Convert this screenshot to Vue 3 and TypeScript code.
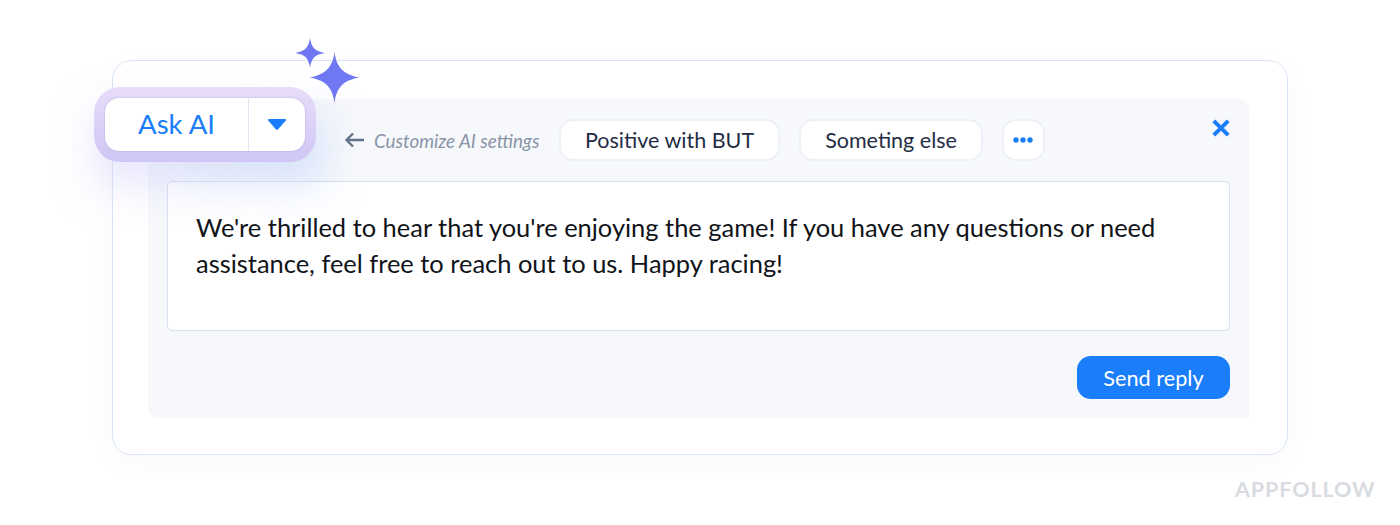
<script setup lang="ts">
const chips: string[] = ['Positive with BUT', 'Someting else']
</script>

<template>
  <div class="page">
    <div class="card">
      <div class="glow"></div>
      <div class="panel">
        <div class="toolbar">
          <svg class="arrow" width="20" height="16" viewBox="0 0 20 16" fill="none">
            <path d="M20 8H2.500M9 1.500 2.500 8 9 14.500" stroke="#5f6f85" stroke-width="2.300" />
          </svg>
          <span class="hint">Customize AI <span class="lig">settings</span></span>
          <button v-for="c in chips" :key="c" class="chip lig">{{ c }}</button>
          <button class="chip more" aria-label="More">
            <svg width="20" height="6" viewBox="0 0 20 6" fill="#1a7efb">
              <circle cx="3" cy="3" r="2.700" /><circle cx="10" cy="3" r="2.700" /><circle cx="17" cy="3" r="2.700" />
            </svg>
          </button>
          <svg class="close" width="18" height="18" viewBox="0 0 18 18" fill="none">
            <path d="M1.800 1.800l14.400 14.400M16.200 1.800 1.800 16.200" stroke="#1a7efb" stroke-width="4" />
          </svg>
        </div>
        <div class="message">
          We're thrilled to hear that you're enjoying the game! If you have any <span class="lig">questions</span> or need
          assistance, feel free to reach out to us. Happy racing!
        </div>
        <div class="actions"><button class="send">Send reply</button></div>
      </div>

      <div class="ask">
        <div class="ask-inner">
          <span class="ask-label">Ask AI</span>
          <span class="ask-drop">
            <svg width="20" height="11" viewBox="0 0 20 11"><path d="M1.200 1.400Q.6 0 2 0h16q1.400 0 .8 1.400l-7.600 8.800q-1.200 1.200-2.400 0z" fill="#1a7efb" /></svg>
          </span>
        </div>
      </div>

      <svg class="sparkles" width="66" height="66" viewBox="0 0 66 66" fill="#6f78f2">
        <path d="M15 0c1.400 9.500 5 13.500 15 15-10 1.500-13.600 5-15 15-1.400-10-5-13.500-15-15C10 13.500 13.600 9.500 15 0z" />
        <path d="M39.500 14c2 15 8.500 22.500 25 25.500-16.500 3-23 10-25 25.500-2-15.500-8.500-22.500-25-25.500 16.500-3 23-10.500 25-25.500z" />
      </svg>
    </div>
    <div class="mark">APPFOLLOW</div>
  </div>
</template>

<style>
html, body { margin: 0; background: #fff; }
</style>

<style scoped>
.page {
  width: 1400px;
  height: 525px;
  box-sizing: border-box;
  padding: 60px 0 0 112px;
  overflow: hidden;
  font-family: Lato, "Noto Sans", sans-serif;
  background: #fff;
}
.lig {
  font-variant-ligatures: common-ligatures discretionary-ligatures;
}
.card {
  position: relative;
  width: 1176px;
  height: 395px;
  box-sizing: border-box;
  padding: 38px 38px 36px 35px;
  border: 1px solid #d9e5f4;
  border-radius: 20px;
  background: #fff;
  box-shadow: 0 8px 24px rgba(120, 135, 170, 0.05);
}
.panel {
  height: 319px;
  box-sizing: border-box;
  padding: 20px 19px 19px 19px;
  background: #f7f8fb;
  border-radius: 10px 10px 0 10px;
  position: relative;
  z-index: 1;
}
.toolbar {
  display: flex;
  align-items: center;
  height: 42px;
  padding-left: 177px;
  position: relative;
}
.arrow { margin-right: 10px; flex: none; }
.hint {
  width: 185px;
  font-style: italic;
  font-size: 18.8px;
  color: #8795a8;
  white-space: nowrap;
}
.chip {
  height: 42px;
  padding: 0 24px;
  margin-right: 19px;
  border: 2px solid #edf1f7;
  border-radius: 14px;
  background: #fff;
  color: #1f2d45;
  font: 400 21.5px Lato, sans-serif;
  white-space: nowrap;
}
.more {
  width: 43px;
  padding: 0;
  display: flex;
  align-items: center;
  justify-content: center;
}
.close { position: absolute; right: 0; top: 0; }
.message {
  height: 150px;
  box-sizing: border-box;
  margin-top: 20px;
  padding: 27px 28px 0;
  border: 1px solid #d5e0f0;
  border-radius: 5px;
  background: #fff;
  color: #101318;
  font-size: 25.45px;
  line-height: 36px;
}
.actions {
  display: flex;
  justify-content: flex-end;
  margin-top: 25px;
}
.send {
  width: 153px;
  height: 43px;
  border: 0;
  border-radius: 14px;
  background: #1a7efb;
  color: #fff;
  font: 400 21.7px Lato, sans-serif;
}
.glow {
  position: absolute;
  left: -20px;
  top: 50px;
  width: 230px;
  height: 75px;
  background: linear-gradient(90deg, rgba(200, 190, 250, 0.35), rgba(180, 205, 250, 0.5));
  filter: blur(20px);
  z-index: 2;
}
.ask {
  position: absolute;
  left: -19px;
  top: 26px;
  width: 222px;
  height: 75px;
  box-sizing: border-box;
  padding: 11px;
  border-radius: 26px;
  background: linear-gradient(180deg, #e9dcfa, #cfc6f5);
  z-index: 3;
}
.ask-inner {
  display: flex;
  height: 100%;
  background: #fff;
  border-radius: 14px;
  box-shadow: 0 0 2px rgba(120, 130, 200, 0.5);
}
.ask-label {
  width: 144px;
  display: flex;
  align-items: center;
  justify-content: center;
  padding-bottom: 3px;
  border-right: 1px solid #dfe5f1;
  box-sizing: border-box;
  color: #1a7efb;
  font-size: 27.5px;
}
.ask-drop {
  flex: 1;
  display: flex;
  align-items: center;
  justify-content: center;
}
.sparkles {
  position: absolute;
  left: 182px;
  top: -23px;
  z-index: 4;
}
.mark {
  position: absolute;
  left: 1235px;
  top: 476px;
  color: #d8dbdf;
  font-size: 21.5px;
  font-weight: 700;
  letter-spacing: 0.900px;
}
</style>
